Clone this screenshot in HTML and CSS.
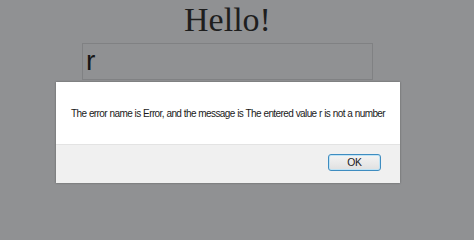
FILE: index.html
```html
<!DOCTYPE html>
<html>
<head>
<meta charset="utf-8">
<link rel="stylesheet" href="styles.css">
</head>
<body>
<div class="page">
  <h1 class="title">Hello!</h1>
  <div class="field">r</div>
</div>
<div class="dialog">
  <div class="dialog-body">The error name is Error, and the message is The entered value r is not a number</div>
  <div class="dialog-footer"><button class="ok">OK</button></div>
</div>
</body>
</html>
```
FILE: styles.css
```css
html, body {
  margin: 0;
  padding: 0;
  background: #909193;
  width: 474px;
  height: 201px;
  overflow: hidden;
}
.page {
  width: 455px;
  text-align: center;
}
.title {
  margin: 0;
  font-family: "Liberation Serif", serif;
  font-weight: normal;
  font-size: 34px;
  line-height: 39px;
  color: #1e1e1e;
}
.field {
  box-sizing: border-box;
  margin: 4px 0 0 82px;
  width: 291px;
  height: 37px;
  border: 1px solid #808183;
  text-align: left;
  padding: 0 0 0 3px;
  font-family: "Liberation Sans", sans-serif;
  font-size: 28px;
  line-height: 33px;
  color: #161616;
}
.dialog {
  position: absolute;
  left: 56px;
  top: 82px;
  width: 344px;
  height: 101px;
  background: #fff;
  box-shadow: 0 0 2px rgba(0,0,0,0.35);
  display: flex;
  flex-direction: column;
}
.dialog-body {
  height: 62px;
  box-sizing: border-box;
  padding: 25px 0 0 15px;
  font-family: "Liberation Sans", sans-serif;
  font-size: 10px;
  letter-spacing: -0.6px;
  word-spacing: 0.3px;
  line-height: 13px;
  color: #1a1a1a;
  white-space: nowrap;
}
.dialog-footer {
  flex: 1;
  background: #f0f0f0;
  border-top: 1px solid #e3e3e3;
  display: flex;
  justify-content: flex-end;
  align-items: flex-start;
  padding: 9px 19px 0 0;
}
.ok {
  width: 53px;
  height: 17px;
  box-sizing: border-box;
  border: 1px solid #3e8cc0;
  border-radius: 3px;
  background: linear-gradient(#f4f4f4, #e0e0e0);
  box-shadow: inset 0 0 0 1px #bfe3f5;
  font-family: "Liberation Sans", sans-serif;
  font-size: 10.4px;
  letter-spacing: -0.3px;
  color: #1a1a1a;
  padding: 0;
  line-height: 14px;
}
```
